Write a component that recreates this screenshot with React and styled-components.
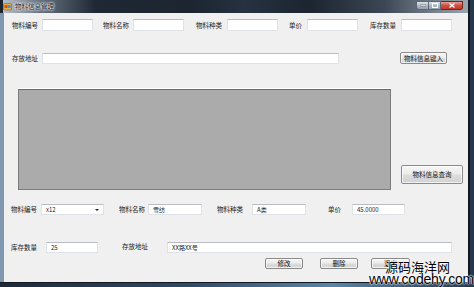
import React from "react";
import styled, { createGlobalStyle } from "styled-components";

const Global = createGlobalStyle`
  html, body { margin: 0; padding: 0; }
  body {
    width: 474px; height: 287px; overflow: hidden;
    font-family: "Noto Sans CJK SC", "Liberation Sans", sans-serif;
  }
`;

const Desktop = styled.div`
  position: relative;
  width: 474px;
  height: 287px;
  background: linear-gradient(90deg, #1c2a3a 0%, #2e4a66 40%, #5a86ac 70%, #24364a 100%);
  overflow: hidden;
`;

const Window = styled.div`
  width: 470px;
  height: 283px;
  display: flex;
  flex-direction: column;
  background: #7f98b0;
  border-right: 2px solid #15191f;
  border-bottom: 1px solid #15191f;
  box-sizing: border-box;
`;

const TitleBar = styled.div`
  height: 13px;
  flex: 0 0 13px;
  display: flex;
  align-items: center;
  padding-left: 3px;
  box-sizing: border-box;
  background: #1c2530;
`;

const Glass = styled.div`
  display: flex;
  align-items: center;
  flex: 1;
  align-self: stretch;
  background: linear-gradient(90deg, rgba(200, 210, 220, 0.9) 0%, rgba(150, 165, 180, 0.6) 8%, rgba(40, 55, 70, 0.2) 20%, rgba(0, 0, 0, 0) 40%, rgba(60, 80, 100, 0.3) 52%, rgba(0, 0, 0, 0) 66%, rgba(90, 105, 120, 0.5) 82%, rgba(170, 180, 190, 0.9) 100%);
`;

const Title = styled.span`
  margin-left: 3px;
  font-size: 6.5px;
  color: #0d141b;
  text-shadow: 0 0 3px #fff, 0 0 2px #fff, 0 0 1px #fff;
  line-height: 1;
`;

const Controls = styled.div`
  margin-left: auto;
  margin-right: 5px;
  display: flex;
  align-self: flex-start;
  margin-top: 1px;
`;

const Ctl = styled.div`
  width: ${(p) => p.$w}px;
  height: 9px;
  display: flex;
  align-items: center;
  justify-content: center;
  box-sizing: border-box;
  border: 1px solid ${(p) => (p.$close ? "#7a2418" : "#5b6775")};
  border-left-width: ${(p) => (p.$first ? 1 : 0)}px;
  border-radius: ${(p) => p.$r};
  background: ${(p) =>
    p.$close
      ? "linear-gradient(180deg, #e8a196 0%, #d0503e 50%, #c0392b 100%)"
      : "linear-gradient(180deg, #dfe5eb 0%, #aebbc8 50%, #93a1b0 100%)"};
`;

const Client = styled.div`
  flex: 1;
  margin: 0 0 0 4px;
  background: #f0f0f0;
  display: flex;
  flex-direction: column;
  padding-top: 6px;
  box-sizing: border-box;
`;

const Row = styled.div`
  display: flex;
  align-items: center;
  height: ${(p) => p.$h || 12}px;
  margin-top: ${(p) => p.$mt || 0}px;
  padding-left: ${(p) => p.$pl || 0}px;
`;

const Field = styled.div`
  display: flex;
  align-items: center;
  margin-left: ${(p) => p.$ml || 0}px;
`;

const Label = styled.span`
  width: ${(p) => p.$w}px;
  font-size: 6.5px;
  color: #1a1a1a;
  white-space: nowrap;
  line-height: 1;
  margin-top: ${(p) => p.$dy || 0}px;
`;

const TextBox = styled.div`
  width: ${(p) => p.$w}px;
  height: ${(p) => p.$h || 12}px;
  box-sizing: border-box;
  background: #fff;
  border: 1px solid #dfe3e8;
  border-top-color: #b9bdc3;
  display: flex;
  align-items: center;
  padding-left: 4px;
  font-size: 6px;
  color: #222;
  position: relative;
  font-family: "Noto Sans CJK SC", "Liberation Serif", serif;
`;

const Arrow = styled.span`
  position: absolute;
  right: 4px;
  top: 50%;
  margin-top: -1px;
  border-left: 2px solid transparent;
  border-right: 2px solid transparent;
  border-top: 2.5px solid #222;
`;

const Button = styled.div`
  width: ${(p) => p.$w}px;
  height: ${(p) => p.$h}px;
  margin-left: ${(p) => p.$ml || 0}px;
  margin-bottom: ${(p) => p.$mb || 0}px;
  box-sizing: border-box;
  border: 1px solid #8a8a8a;
  border-radius: 2px;
  background: linear-gradient(180deg, #f6f6f6 0%, #ebebeb 48%, #dddddd 52%, #d2d2d2 100%);
  box-shadow: inset 0 0 0 1px rgba(255, 255, 255, 0.7);
  display: flex;
  align-items: center;
  justify-content: center;
  font-size: 6.5px;
  color: #111;
  line-height: 1;
`;

const Middle = styled.div`
  display: flex;
  align-items: flex-end;
  height: 101px;
  margin-top: 25px;
  padding-left: 14px;
`;

const Grid = styled.div`
  width: 373px;
  height: 101px;
  box-sizing: border-box;
  background: #ababab;
  border: 1px solid #7c7c7c;
  border-top-color: #6a6a6a;
  box-shadow: 0 -1px 0 #fff;
`;

const Watermark = styled.div`
  position: absolute;
  right: 0;
  bottom: 0;
  display: flex;
  flex-direction: column;
  align-items: flex-end;
  color: #000;
  text-shadow: 0 0 2px #fff, 0 0 2px #fff, 0 0 1px #fff;
  line-height: 1;
`;

const WmCn = styled.div`
  font-family: "Noto Sans CJK SC", sans-serif;
  font-size: 13px;
  margin-right: 24px;
  margin-bottom: -1px;
`;

const WmEn = styled.div`
  font-family: "Liberation Sans", sans-serif;
  font-size: 14px;
  letter-spacing: -0.2px;
  margin-bottom: 1px;
`;

const AppIcon = () => (
  <svg width="9" height="9" viewBox="0 0 9 9">
    <rect x="0.5" y="1.5" width="8" height="6.5" rx="1" fill="#e8b24a" stroke="#8a5a14" strokeWidth="0.6" />
    <rect x="1.5" y="3" width="3" height="3" fill="#d94a2b" />
    <rect x="4.5" y="3" width="3" height="3" fill="#4a8ad9" />
  </svg>
);

export default function App() {
  return (
    <>
      <Global />
      <Desktop>
        <Window>
          <TitleBar>
            <Glass>
              <AppIcon />
              <Title>物料信息管理</Title>
              <Controls>
                <Ctl $w={13} $first $r="0 0 0 3px">
                  <svg width="6" height="3"><rect x="0" y="1" width="6" height="1.5" fill="#fff" stroke="#333" strokeWidth="0.4" /></svg>
                </Ctl>
                <Ctl $w={12} $r="0">
                  <svg width="6" height="5"><rect x="0.5" y="0.5" width="5" height="4" fill="none" stroke="#fff" strokeWidth="1" /></svg>
                </Ctl>
                <Ctl $w={22} $close $r="0 0 3px 0">
                  <svg width="6" height="5"><path d="M0.5 0.5 L5.5 4.5 M5.5 0.5 L0.5 4.5" stroke="#fff" strokeWidth="1.3" /></svg>
                </Ctl>
              </Controls>
            </Glass>
          </TitleBar>
          <Client>
            <Row $pl={8}>
              <Field><Label $w={30}>物料编号</Label><TextBox $w={51} /></Field>
              <Field $ml={10}><Label $w={30}>物料名称</Label><TextBox $w={51} /></Field>
              <Field $ml={12}><Label $w={31}>物料种类</Label><TextBox $w={51} /></Field>
              <Field $ml={11}><Label $w={18}>单价</Label><TextBox $w={51} /></Field>
              <Field $ml={12}><Label $w={31}>库存数量</Label><TextBox $w={51} /></Field>
            </Row>
            <Row $pl={8} $mt={21}>
              <Field><Label $w={30}>存放地址</Label><TextBox $w={297} $h={11} /></Field>
              <Button $w={47} $h={12} $ml={61}>物料信息键入</Button>
            </Row>
            <Middle>
              <Grid />
              <Button $w={62} $h={19} $ml={10} $mb={6}>物料信息查询</Button>
            </Middle>
            <Row $pl={7} $mt={14} $h={11}>
              <Field><Label $w={30}>物料编号</Label><TextBox $w={63} $h={11}>x12<Arrow /></TextBox></Field>
              <Field $ml={15}><Label $w={29}>物料名称</Label><TextBox $w={54} $h={11}>雪纺</TextBox></Field>
              <Field $ml={15}><Label $w={35}>物料种类</Label><TextBox $w={54} $h={11}>A类</TextBox></Field>
              <Field $ml={22}><Label $w={24}>单价</Label><TextBox $w={53} $h={11}>45.0000</TextBox></Field>
            </Row>
            <Row $pl={7} $mt={27} $h={11}>
              <Field><Label $w={35}>库存数量</Label><TextBox $w={52} $h={11}>25</TextBox></Field>
              <Field $ml={24}><Label $w={45} $dy={-3}>存放地址</Label><TextBox $w={285} $h={11}>XX路XX号</TextBox></Field>
            </Row>
            <Row $pl={261} $mt={5} $h={11}>
              <Button $w={38} $h={11}>修改</Button>
              <Button $w={38} $h={11} $ml={17}>删除</Button>
              <Button $w={39} $h={11} $ml={13}>退出</Button>
            </Row>
          </Client>
        </Window>
        <Watermark>
          <WmCn>源码海洋网</WmCn>
          <WmEn>www.codehy.com</WmEn>
        </Watermark>
      </Desktop>
    </>
  );
}
